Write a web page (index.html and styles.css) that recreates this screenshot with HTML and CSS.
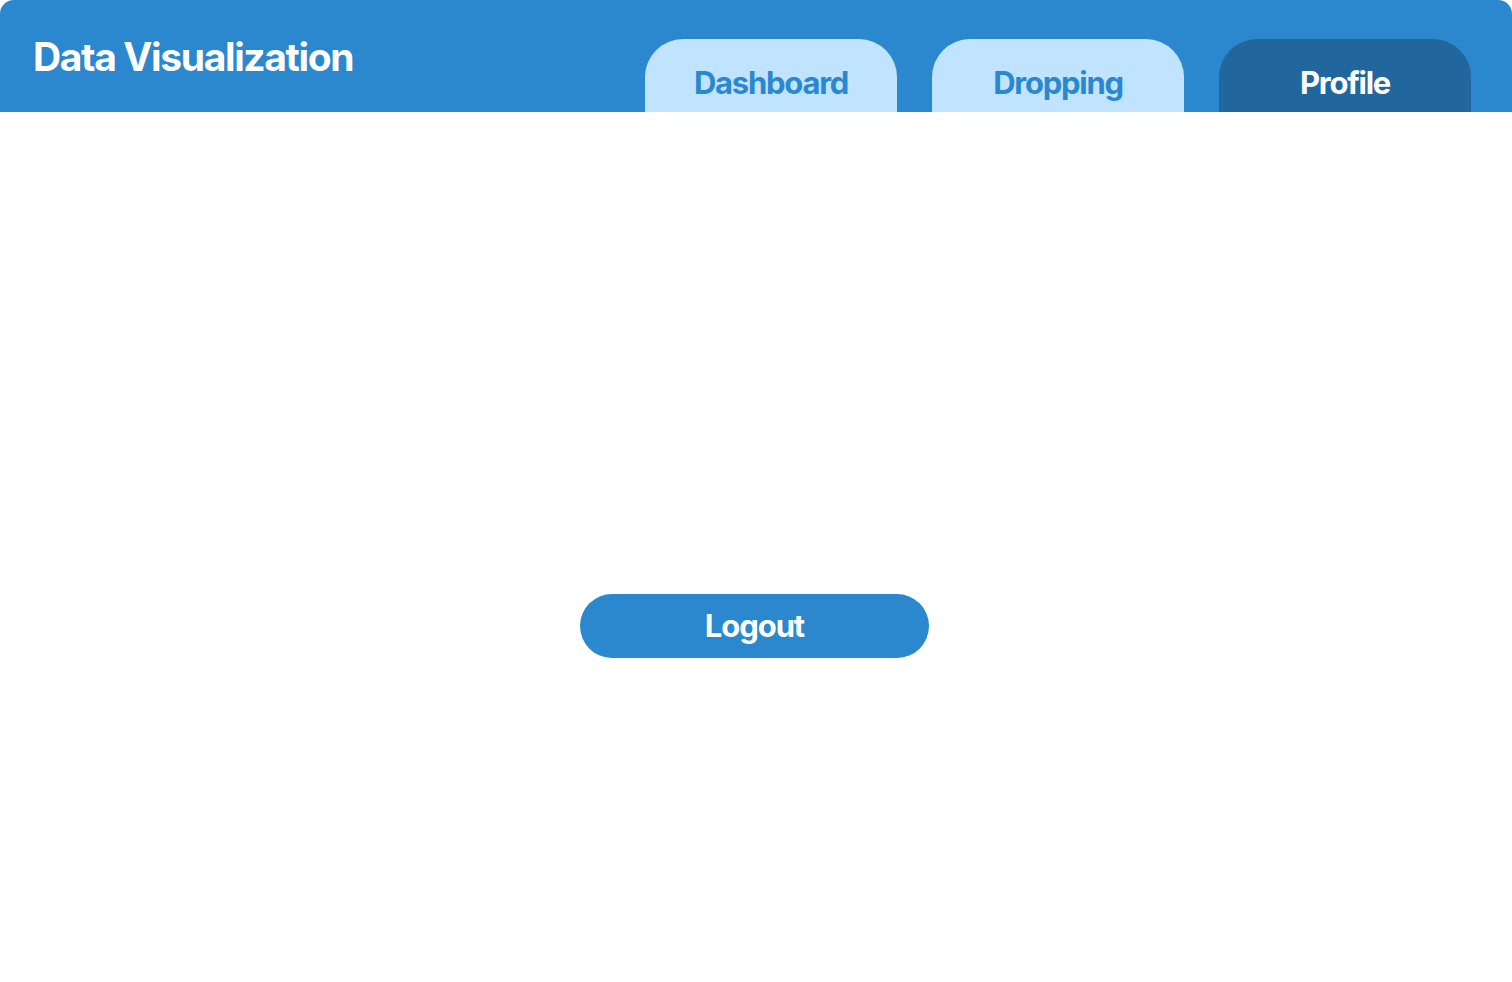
FILE: index.html
```html
<!DOCTYPE html>
<html lang="en">
<head>
<meta charset="utf-8">
<title>Data Visualization</title>
<link rel="stylesheet" href="styles.css">
</head>
<body>
<header class="topbar">
  <h1 class="brand">Data Visualization</h1>
  <nav class="tabs">
    <a class="tab" href="#">Dashboard</a>
    <a class="tab" href="#">Dropping</a>
    <a class="tab tab-active" href="#">Profile</a>
  </nav>
</header>
<main class="content">
  <button class="logout" type="button">Logout</button>
</main>
</body>
</html>
```

FILE: styles.css
```css
* {
  box-sizing: border-box;
}

html, body {
  margin: 0;
  padding: 0;
  background: #ffffff;
  font-family: Inter, "Noto Sans", "Liberation Sans", sans-serif;
}

.topbar {
  height: 112px;
  background: #2b88ce;
  border-radius: 14px 14px 0 0;
  display: flex;
  justify-content: space-between;
  align-items: flex-end;
  padding: 0 41px 0 33px;
}

.brand {
  align-self: flex-start;
  margin: 0;
  padding-top: 37px;
  font-size: 39px;
  line-height: 40px;
  font-weight: 700;
  letter-spacing: -0.035em;
  color: #ffffff;
}

.tabs {
  display: flex;
  gap: 35px;
}

.tab {
  width: 252px;
  height: 73px;
  padding-top: 28px;
  border-radius: 38px 38px 0 0;
  background: #c0e4ff;
  color: #2b88ce;
  text-align: center;
  text-decoration: none;
  font-size: 31px;
  line-height: 32px;
  font-weight: 700;
  letter-spacing: -0.04em;
}

.tab-active {
  background: #21679e;
  color: #ffffff;
}

.content {
  display: flex;
  justify-content: center;
  padding: 482px 3px 0 0;
}

.logout {
  width: 349px;
  height: 64px;
  border: none;
  border-radius: 32px;
  background: #2b88ce;
  color: #ffffff;
  font-family: inherit;
  font-size: 31px;
  line-height: 64px;
  font-weight: 700;
  letter-spacing: -0.035em;
  padding: 0;
}
```
